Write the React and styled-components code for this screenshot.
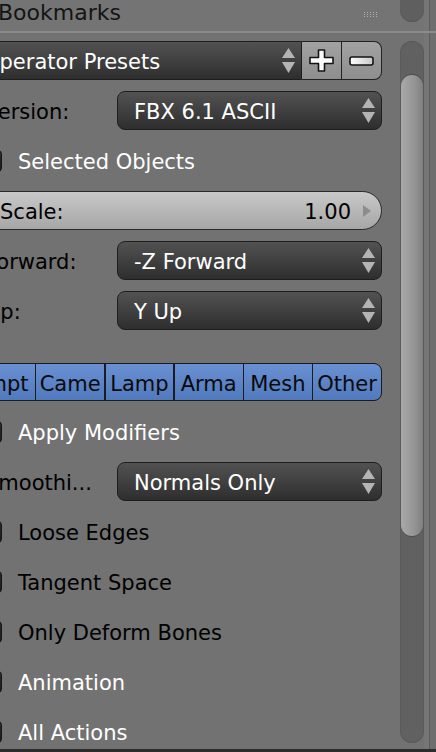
import React from 'react';
import styled, { createGlobalStyle } from 'styled-components';

const GlobalStyle = createGlobalStyle`
    html, body {
        margin: 0;
        padding: 0;
        background: #727272;
        overflow: hidden;
    }
    * {
        box-sizing: border-box;
    }
`;

const UpDown = () => (
    <svg width="13" height="25" viewBox="0 0 13 25">
        <polygon points="6.5,0 13,10 0,10" fill="#b4b4b4" />
        <polygon points="0,14 13,14 6.5,25" fill="#b4b4b4" />
    </svg>
);

const PlusIcon = () => (
    <svg width="25" height="23" viewBox="0 0 25 23">
        <path
            d="M9.5 1 H15.5 V8.5 H24 V14.5 H15.5 V22 H9.5 V14.5 H1 V8.5 H9.5 Z"
            fill="#fafafa"
            stroke="#141414"
            strokeWidth="1.6"
            strokeLinejoin="round"
        />
    </svg>
);

const MinusIcon = () => (
    <svg width="25" height="10" viewBox="0 0 25 10">
        <defs>
            <linearGradient id="mg" x1="0" y1="0" x2="1" y2="0">
                <stop offset="0" stopColor="#ffffff" />
                <stop offset="1" stopColor="#c8c8c8" />
            </linearGradient>
        </defs>
        <rect x="1" y="1" width="23" height="8" rx="2" fill="url(#mg)" stroke="#141414" strokeWidth="1.6" />
    </svg>
);

const CheckMark = () => (
    <svg width="22" height="22" viewBox="0 0 22 22">
        <path d="M5 11 L9.5 16 L20 2" fill="none" stroke="#f4f4f4" strokeWidth="3" />
    </svg>
);

const Grip = () => (
    <svg width="14" height="6" viewBox="0 0 14 6">
        {[0, 1, 2, 3, 4].map(c =>
            [0, 1, 2].map(r => (
                <rect key={`${c}-${r}`} x={c * 3} y={r * 2} width="1" height="1" fill="#b0b0b0" />
            ))
        )}
    </svg>
);

const tabs = ['Empt', 'Came', 'Lamp', 'Arma', 'Mesh', 'Other'];

const App = () => {
    return (
        <>
            <GlobalStyle />
            <Page>
                <Header>
                    <Title>Bookmarks</Title>
                    <GripBox>
                        <Grip />
                    </GripBox>
                    <ScrollStub />
                    <Edge />
                </Header>
                <Body>
                    <Panel>
                        <Row>
                            <Menu grouped>
                                <MenuText>Operator Presets</MenuText>
                                <UpDown />
                            </Menu>
                            <IconButton>
                                <PlusIcon />
                            </IconButton>
                            <IconButton last>
                                <MinusIcon />
                            </IconButton>
                        </Row>
                        <Row>
                            <Label>Version:</Label>
                            <Menu>
                                <MenuText>FBX 6.1 ASCII</MenuText>
                                <UpDown />
                            </Menu>
                        </Row>
                        <CheckRow checked>
                            <Box>
                                <CheckMark />
                            </Box>
                            <CheckText>Selected Objects</CheckText>
                        </CheckRow>
                        <Row>
                            <Slider>
                                <SliderText>Scale:</SliderText>
                                <SliderValue>1.00</SliderValue>
                                <SliderArrow />
                            </Slider>
                        </Row>
                        <Row>
                            <Label>Forward:</Label>
                            <Menu>
                                <MenuText>-Z Forward</MenuText>
                                <UpDown />
                            </Menu>
                        </Row>
                        <Row>
                            <Label>Up:</Label>
                            <Menu>
                                <MenuText>Y Up</MenuText>
                                <UpDown />
                            </Menu>
                        </Row>
                        <TabRow>
                            {tabs.map(t => (
                                <Tab key={t}>{t}</Tab>
                            ))}
                        </TabRow>
                        <CheckRow checked>
                            <Box>
                                <CheckMark />
                            </Box>
                            <CheckText>Apply Modifiers</CheckText>
                        </CheckRow>
                        <Row>
                            <Label>Smoothi...</Label>
                            <Menu>
                                <MenuText>Normals Only</MenuText>
                                <UpDown />
                            </Menu>
                        </Row>
                        <CheckRow>
                            <Box />
                            <CheckText>Loose Edges</CheckText>
                        </CheckRow>
                        <CheckRow>
                            <Box />
                            <CheckText>Tangent Space</CheckText>
                        </CheckRow>
                        <CheckRow>
                            <Box />
                            <CheckText>Only Deform Bones</CheckText>
                        </CheckRow>
                        <CheckRow checked>
                            <Box>
                                <CheckMark />
                            </Box>
                            <CheckText>Animation</CheckText>
                        </CheckRow>
                        <CheckRow checked>
                            <Box>
                                <CheckMark />
                            </Box>
                            <CheckText>All Actions</CheckText>
                        </CheckRow>
                    </Panel>
                    <Track>
                        <Thumb />
                    </Track>
                    <Edge />
                </Body>
                <BottomLine />
            </Page>
        </>
    );
};
export default App;

const Page = styled.div`
    width: 436px;
    height: 752px;
    display: flex;
    flex-direction: column;
    overflow: hidden;
    background: #727272;
    font-family: 'DejaVu Sans', 'Liberation Sans', sans-serif;
    font-size: 21px;
`;

const Header = styled.div`
    height: 33px;
    flex: none;
    display: flex;
    align-items: flex-start;
    background: #747474;
    border-bottom: 2px solid #8a8a8a;
`;

const Title = styled.div`
    flex: 1;
    margin-left: -2px;
    line-height: 26px;
    font-size: 22px;
    color: #141414;
`;

const GripBox = styled.div`
    margin-top: 12px;
    margin-right: 22px;
    display: flex;
`;

const ScrollStub = styled.div`
    width: 24px;
    height: 22px;
    background: #5f5f5f;
    border-radius: 0 0 12px 12px;
    box-shadow: inset 0 -1px 0 #575757;
`;

const Edge = styled.div`
    width: 12px;
    align-self: stretch;
    background: linear-gradient(to right, #767676 0 5px, #5c5c5c 5px 6px, #6e6e6e 6px);
`;

const Body = styled.div`
    flex: 1;
    display: flex;
    min-height: 0;
    overflow: hidden;
`;

const Panel = styled.div`
    margin-left: -34px;
    width: 416px;
    flex: none;
    display: flex;
    flex-direction: column;
    gap: 11px;
    padding-top: 8px;
`;

const Row = styled.div`
    height: 39px;
    flex: none;
    display: flex;
    align-items: stretch;
`;

const Label = styled.div`
    width: 151px;
    flex: none;
    padding: 3px 0 0 19px;
    display: flex;
    align-items: center;
    color: #000;
    white-space: nowrap;
`;

const Menu = styled.div`
    flex: 1;
    display: flex;
    align-items: center;
    padding: 0 6px 0 16px;
    color: #fff;
    background: linear-gradient(to bottom, #525252, #2e2e2e);
    border: 1.5px solid #1e1e1e;
    border-radius: ${props => (props.grouped ? '8px 0 0 8px' : '8px')};
`;

const MenuText = styled.span`
    flex: 1;
    padding-top: 3px;
    white-space: nowrap;
    overflow: hidden;
`;

const IconButton = styled.div`
    width: 40px;
    flex: none;
    display: flex;
    align-items: center;
    justify-content: center;
    background: linear-gradient(to bottom, #a2a2a2, #8e8e8e);
    border: 1.5px solid #222;
    border-left: none;
    border-radius: ${props => (props.last ? '0 8px 8px 0' : '0')};
`;

const CheckRow = styled.div`
    height: 39px;
    flex: none;
    display: flex;
    align-items: center;
    gap: 16px;
    padding-left: 14px;
    color: ${props => (props.checked ? '#ffffff' : '#000000')};
    white-space: nowrap;
`;

const CheckText = styled.span`
    padding-top: 3px;
`;

const Box = styled.div`
    width: 22px;
    height: 22px;
    flex: none;
    border-radius: 4px;
    background: linear-gradient(to bottom, #2a2a2a, #1c1c1c);
    border: 1px solid #161616;
    display: flex;
`;

const Slider = styled.div`
    flex: 1;
    display: flex;
    align-items: center;
    padding: 0 10px 0 33px;
    color: #000;
    background: linear-gradient(to bottom, #c9c9c9, #a6a6a6);
    border: 1.5px solid #2a2a2a;
    border-radius: 20px;
`;

const SliderText = styled.span`
    padding-top: 3px;
`;

const SliderValue = styled(SliderText)`
    margin-left: auto;
    margin-right: 12px;
`;

const SliderArrow = styled.span`
    width: 0;
    height: 0;
    border-top: 6px solid transparent;
    border-bottom: 6px solid transparent;
    border-left: 8px solid #8c8c8c;
`;

const TabRow = styled(Row)`
    margin-top: 22px;
    height: 38px;
    background: #1c1c1c;
    border: 1.5px solid #1c1c1c;
    border-radius: 8px;
    overflow: hidden;
    gap: 1.5px;
`;

const Tab = styled.div`
    flex: 1;
    display: flex;
    align-items: center;
    justify-content: center;
    padding-top: 4px;
    overflow: hidden;
    white-space: nowrap;
    color: #0a0a0a;
    background: linear-gradient(to bottom, #6890d2, #5179bd);
`;

const Track = styled.div`
    margin-left: 18px;
    margin-top: 8px;
    margin-bottom: 6px;
    width: 24px;
    flex: none;
    background: #616161;
    border-radius: 12px;
    box-shadow: inset 0 0 0 1px #5a5a5a;
    display: flex;
    flex-direction: column;
    align-items: center;
`;

const Thumb = styled.div`
    margin-top: 34px;
    width: 22px;
    height: 461px;
    border-radius: 11px;
    background: linear-gradient(to right, #a9a9a9, #959595 60%, #808080);
    box-shadow: 0 -1px 0 #4a4a4a, 0 1px 0 #4f4f4f;
`;

const BottomLine = styled.div`
    height: 3px;
    flex: none;
    background: #2c2c2c;
`;
